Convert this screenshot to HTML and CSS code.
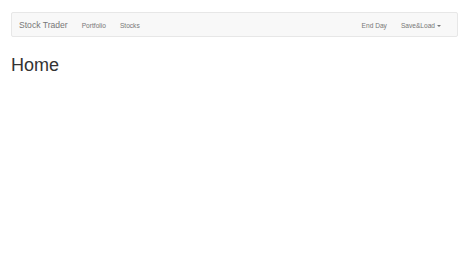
FILE: index.html
```html
<!DOCTYPE html>
<html lang="en">
  <head>
    <meta charset="UTF-8" />
    <meta name="viewport" content="width=device-width, initial-scale=1.0" />
    <title>Stock Trader</title>
    <link rel="stylesheet" href="styles.css">
  </head>
  <body>
    <div class="container">
      <nav class="navbar">
        <div class="nav-left">
          <a class="brand" href="#">Stock Trader</a>
          <a class="nav-link" href="#">Portfolio</a>
          <a class="nav-link" href="#">Stocks</a>
        </div>
        <div class="nav-right">
          <a class="nav-link" href="#">End Day</a>
          <a class="nav-link dropdown" href="#">Save&amp;Load<span class="caret"></span></a>
        </div>
      </nav>
      <h1>Home</h1>
    </div>
  </body>
</html>
```

FILE: styles.css
```css
body {
  margin: 0;
  background-color: #ffffff;
  font-family: "Liberation Sans", Arial, sans-serif;
  color: #333333;
}

.container {
  padding: 12px 16px 0 11px;
}

.navbar {
  display: flex;
  justify-content: space-between;
  align-items: center;
  height: 23px;
  background-color: #f8f8f8;
  border: 1px solid #e7e7e7;
  border-radius: 2px;
}

.nav-left,
.nav-right {
  display: flex;
  align-items: center;
}

.nav-right {
  padding-right: 9px;
}

a {
  text-decoration: none;
  color: #777777;
}

.brand {
  font-size: 8.6px;
  padding: 0 7px;
  margin-top: 1px;
}

.nav-link {
  font-size: 6.6px;
  padding: 0 7px;
  margin-top: 1px;
}

.caret {
  display: inline-block;
  width: 0;
  height: 0;
  margin-left: 2px;
  vertical-align: middle;
  border-top: 2px solid #777777;
  border-left: 2px solid transparent;
  border-right: 2px solid transparent;
}

h1 {
  margin: 18px 0 0;
  font-size: 18px;
  font-weight: 500;
  line-height: 20px;
}
```
